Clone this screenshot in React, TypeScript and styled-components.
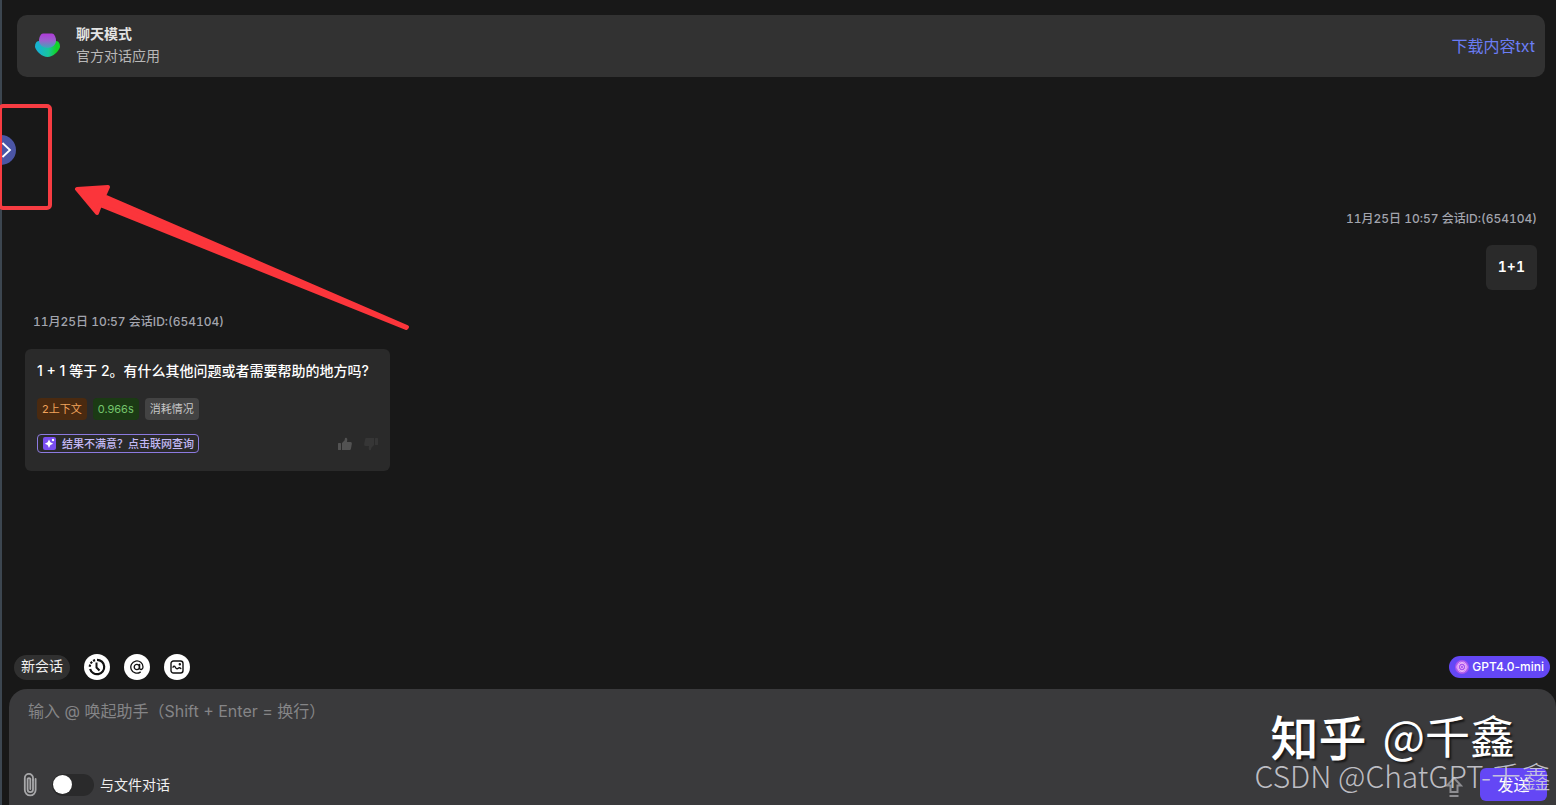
import React from "react";
import styled, { createGlobalStyle } from "styled-components";

const GlobalStyle = createGlobalStyle`
  * { box-sizing: border-box; }
  html, body { margin: 0; background: #181818; }
  body { font-family: Inter, "Noto Sans CJK SC", sans-serif; color: #fff; overflow: hidden; }
  button, input, textarea { font: inherit; color: inherit; }
  button { border: 0; cursor: pointer; }
  p, h1 { margin: 0; }
`;

const Page = styled.div`
  position: relative;
  display: flex;
  flex-direction: column;
  height: 100vh;
  overflow: hidden;
  padding-left: 2px;
  box-shadow: inset 2px 0 0 #3c4650;
  background: #181818;
`;

const Header = styled.header`
  display: flex;
  align-items: center;
  gap: 16px;
  margin: 15px 11px 0 15px;
  padding: 8px 10px 10px 18px;
  height: 62px;
  border-radius: 10px;
  background: #323232;
`;

const Titles = styled.div`
  flex: 1;
  line-height: 22px;
  font-size: 14px;
`;

const Title = styled.h1`
  font-size: 14px;
  line-height: 22px;
  font-weight: 700;
  color: #e4e4e4;
`;

const Subtitle = styled.p`
  color: #b8b8b8;
`;

const DownloadLink = styled.a`
  font-size: 16px;
  color: #6b7df5;
  text-decoration: none;
`;

const Conversation = styled.main`
  flex: 1;
  display: flex;
  flex-direction: column;
  padding: 132px 19px 0 23px;
`;

const Meta = styled.p<{ $mine?: boolean }>`
  align-self: ${(p) => (p.$mine ? "flex-end" : "flex-start")};
  padding-left: ${(p) => (p.$mine ? "0" : "8px")};
  font-size: 12px;
  line-height: 20px;
  font-weight: 500;
  font-variant-numeric: tabular-nums;
  color: #a3a5ae;
`;

const Bubble = styled.div<{ $mine?: boolean }>`
  align-self: ${(p) => (p.$mine ? "flex-end" : "flex-start")};
  width: ${(p) => (p.$mine ? "auto" : "365px")};
  margin: ${(p) => (p.$mine ? "16px 0 22px" : "17px 0 0")};
  padding: ${(p) => (p.$mine ? "11px 12px 12px" : "11px 12px 18px")};
  border-radius: 6px;
  background: #2a2a2a;
  font-size: 14px;
  line-height: 22px;
  font-weight: ${(p) => (p.$mine ? 600 : 500)};
  font-variant-numeric: ${(p) => (p.$mine ? "tabular-nums" : "normal")};
`;

const Tags = styled.div`
  display: flex;
  gap: 6px;
  margin: 16px 0 14px;
`;

const Tag = styled.span<{ $bg: string; $fg: string }>`
  padding: 0 5px;
  border-radius: 4px;
  font-size: 11px;
  line-height: 22px;
  font-weight: 400;
  background: ${(p) => p.$bg};
  color: ${(p) => p.$fg};
`;

const Actions = styled.div`
  display: flex;
  align-items: center;
  gap: 12px;
`;

const SearchButton = styled.button`
  display: flex;
  align-items: center;
  gap: 6px;
  height: 19px;
  margin-right: auto;
  padding: 0 4px 0 5px;
  border: 1px solid #8c7ae0;
  border-radius: 4px;
  background: transparent;
  color: #c3b9f5;
  font-size: 11px;
  line-height: 16px;
`;

const IconButton = styled.button<{ $color: string }>`
  display: flex;
  padding: 0;
  background: transparent;
  color: ${(p) => p.$color};
`;

const Toolbar = styled.div`
  display: flex;
  align-items: center;
  gap: 14px;
  margin: 0 6px 9px 12px;
`;

const NewChat = styled.button`
  height: 25px;
  padding: 0 7px 2px;
  border-radius: 13px;
  background: #303030;
  color: #f0f0f0;
  font-size: 14px;
  line-height: 22px;
`;

const RoundButton = styled.button`
  display: flex;
  align-items: center;
  justify-content: center;
  width: 26px;
  height: 26px;
  padding: 0;
  border-radius: 50%;
  background: #fff;
  color: #111;
`;

const ModelButton = styled.button`
  display: flex;
  align-items: center;
  gap: 3px;
  height: 22px;
  margin-left: auto;
  padding: 0 6px;
  border-radius: 11px;
  background: #6447f5;
  font-size: 12px;
  line-height: 20px;
  font-weight: 500;
`;

const Composer = styled.form`
  display: flex;
  flex-direction: column;
  height: 116px;
  margin-left: 7px;
  padding: 10px 9px 4px 13px;
  border-radius: 18px 18px 0 0;
  background: #3a3a3c;
`;

const Prompt = styled.textarea`
  flex: 1;
  padding: 0 6px;
  border: 0;
  outline: 0;
  resize: none;
  background: transparent;
  font-size: 16px;
  line-height: 24px;
  &::placeholder { color: #858587; opacity: 1; }
`;

const ComposerBar = styled.div`
  display: flex;
  align-items: center;
  height: 33px;
`;

const SwitchLabel = styled.label`
  display: flex;
  align-items: center;
  gap: 6px;
  margin: 0 auto 0 14px;
  font-size: 14px;
  line-height: 22px;
  color: #f0f0f0;
`;

const Switch = styled.input`
  appearance: none;
  display: flex;
  align-items: center;
  width: 42px;
  height: 22px;
  margin: 0;
  padding: 0 1px;
  border-radius: 11px;
  background: #2a2a2b;
  &::before {
    content: "";
    width: 19px;
    height: 19px;
    border-radius: 50%;
    background: #fff;
  }
  &:checked { justify-content: flex-end; }
`;

const ShiftHint = styled.svg`
  align-self: flex-end;
`;

const SendButton = styled.button`
  height: 33px;
  width: 67px;
  margin-left: 17px;
  padding: 0 0 2px;
  border-radius: 6px;
  background: #6447f5;
  font-size: 16px;
`;

const DrawerHandle = styled.button`
  position: absolute;
  top: 135px;
  left: -14px;
  display: flex;
  align-items: center;
  justify-content: flex-end;
  width: 30px;
  height: 30px;
  padding: 0 4px 0 0;
  border-radius: 50%;
  background: #4b55a5;
`;

const Highlight = styled.div`
  position: absolute;
  top: 104px;
  left: -2px;
  width: 54px;
  height: 106px;
  border: 4px solid #f73c42;
  border-radius: 5px;
`;

const Pointer = styled.svg`
  position: absolute;
  top: 180px;
  left: 69px;
`;

const Watermarks = styled.div`
  position: absolute;
  right: 5px;
  bottom: 15px;
  display: flex;
  flex-direction: column;
  align-items: flex-end;
  font-family: "Noto Sans CJK SC", sans-serif;
  white-space: nowrap;
  pointer-events: none;
`;

const Author = styled.p`
  display: flex;
  align-items: center;
  gap: 16px;
  padding-right: 36px;
  font-size: 45px;
  line-height: 50px;
  text-shadow: 2px 2px 2px rgba(0, 0, 0, 0.6);
`;

const Brand = styled.span`
  font-size: 48px;
  font-weight: 500;
`;

const Site = styled.p`
  font-size: 30px;
  line-height: 30px;
  font-weight: 300;
  color: rgba(214, 214, 220, 0.85);
`;

const Logo = () => (
  <svg width="25" height="25" viewBox="0 0 25 25" aria-hidden="true">
    <defs>
      <linearGradient id="base" x1="0" x2="1">
        <stop offset="0.15" stopColor="#17b3cf" />
        <stop offset="0.55" stopColor="#18c79a" />
        <stop offset="0.85" stopColor="#12d326" />
      </linearGradient>
      <linearGradient id="cap" x1="0" x2="0" y1="0" y2="1">
        <stop offset="0" stopColor="#b03ada" />
        <stop offset="0.5" stopColor="#9a62cc" />
        <stop offset="1" stopColor="#3fa5b8" />
      </linearGradient>
    </defs>
    <path d="M4 8 C1 8 0 11 0 14 C1 18 7 24 12.500 24 C18 24 24 18 25 14 C25 11 24 8 21 8Z" fill="url(#base)" />
    <path d="M8 0.500 H17 C19 0.500 21 4 21 7.500 C21 12 17 15 12.500 15 C8 15 4 12 4 7.500 C4 4 6 0.500 8 0.500Z" fill="url(#cap)" />
  </svg>
);

const Sparkle = () => (
  <svg width="13" height="13" viewBox="0 0 13 13" aria-hidden="true">
    <rect width="13" height="13" rx="2" fill="#7a4ef0" />
    <path d="M6 2.500 L7.400 5.300 L10.200 6.700 L7.400 8.100 L6 11 L4.600 8.100 L1.800 6.700 L4.600 5.300Z" fill="#fff" />
    <circle cx="10" cy="3" r="1.200" fill="#fff" />
  </svg>
);

const Thumb = ({ down = false }: { down?: boolean }) => (
  <svg width="14" height="14" viewBox="0 0 14 14" fill="currentColor" aria-hidden="true">
    <g transform={down ? "rotate(180 7 7)" : undefined}>
      <rect y="6" width="3" height="7" rx="0.500" />
      <path d="M4 6 L6.500 3.500 L7 1.200 C7.200 0.300 9.300 0.500 9.300 2.500 L9 5 H12.500 C13.800 5 14 6 13.800 7 L13 11.500 C12.800 12.600 12.200 13 11.300 13 H4Z" />
    </g>
  </svg>
);

const HistoryIcon = () => (
  <svg width="18" height="18" viewBox="0 0 18 18" fill="none" stroke="currentColor" strokeWidth="2.200" aria-hidden="true">
    <path d="M9 1.800 A7.200 7.200 0 1 1 2.100 11" />
    <path d="M1.800 8.800 A7.200 7.200 0 0 1 7.400 2" strokeDasharray="2.200 1.200" />
    <path d="M8.500 4.500 V9.500 L11.500 12.500" strokeWidth="2" />
  </svg>
);

const AtIcon = () => (
  <svg width="14" height="14" viewBox="0 0 14 14" fill="none" stroke="currentColor" strokeWidth="1.300" strokeLinecap="round" aria-hidden="true">
    <circle cx="6.800" cy="7" r="2.600" />
    <path d="M9.600 4.300 V8 C9.600 10.300 13 10 13 7 A6.100 6.100 0 1 0 10.300 12.100" />
  </svg>
);

const ImageIcon = () => (
  <svg width="14" height="14" viewBox="0 0 14 14" fill="none" stroke="currentColor" strokeWidth="1.400" strokeLinecap="round" aria-hidden="true">
    <rect x="1" y="1" width="12" height="12" rx="2.500" />
    <path d="M3 7.200 C3.600 5.800 4.600 5.800 5.300 7.200 S7.200 9.300 8.200 8.300 S10 7.600 10.800 8.400" />
    <circle cx="9.800" cy="4.300" r="0.500" fill="currentColor" />
  </svg>
);

const ModelIcon = () => (
  <svg width="14" height="14" viewBox="0 0 14 14" fill="none" aria-hidden="true">
    <circle cx="7" cy="7" r="7" fill="#a855f0" />
    <g stroke="#f0b8f8" strokeWidth="0.800">
      <circle cx="7" cy="7" r="1.600" />
      <ellipse cx="7" cy="7" rx="5.200" ry="3.600" />
      <ellipse cx="7" cy="7" rx="5.200" ry="3.600" transform="rotate(60 7 7)" />
      <ellipse cx="7" cy="7" rx="5.200" ry="3.600" transform="rotate(120 7 7)" />
    </g>
  </svg>
);

const ClipIcon = () => (
  <svg width="16" height="24" viewBox="0 0 16 24" fill="none" stroke="#a8a8aa" strokeWidth="1.800" strokeLinecap="round" aria-hidden="true">
    <path d="M11 7 V16.500 A2.700 2.700 0 0 1 5.600 16.500 V6 A1.500 1.500 0 0 1 8.300 6 V16" />
    <path d="M11 7 V5 A4 4 0 0 0 2.800 5 V17 A5.400 5.400 0 0 0 13.600 17 V6" />
  </svg>
);

const ShiftIcon = () => (
  <ShiftHint width="18" height="25" viewBox="0 0 18 25" fill="none" stroke="#8e8e92" strokeWidth="2" aria-hidden="true">
    <path d="M9 2 L16 9.500 H12.500 V16 H5.500 V9.500 H2Z" />
    <path d="M4.500 20 H13.500" />
  </ShiftHint>
);

export default function App() {
  return (
    <>
      <GlobalStyle />
      <Page>
        <Header>
          <Logo />
          <Titles>
            <Title>聊天模式</Title>
            <Subtitle>官方对话应用</Subtitle>
          </Titles>
          <DownloadLink href="#download">下载内容txt</DownloadLink>
        </Header>

        <Conversation>
          <Meta $mine>11月25日 10:57 会话ID:(654104)</Meta>
          <Bubble $mine>1+1</Bubble>
          <Meta>11月25日 10:57 会话ID:(654104)</Meta>
          <Bubble>
            <p>1 + 1 等于 2。有什么其他问题或者需要帮助的地方吗?</p>
            <Tags>
              <Tag $bg="#4a2a10" $fg="#f0a35c">2上下文</Tag>
              <Tag $bg="#1b3a14" $fg="#74c46c">0.966s</Tag>
              <Tag $bg="#434343" $fg="#c8c8c8">消耗情况</Tag>
            </Tags>
            <Actions>
              <SearchButton type="button">
                <Sparkle />
                结果不满意？点击联网查询
              </SearchButton>
              <IconButton type="button" $color="#525252" aria-label="赞">
                <Thumb />
              </IconButton>
              <IconButton type="button" $color="#363636" aria-label="踩">
                <Thumb down />
              </IconButton>
            </Actions>
          </Bubble>
        </Conversation>

        <Toolbar>
          <NewChat type="button">新会话</NewChat>
          <RoundButton type="button" aria-label="历史"><HistoryIcon /></RoundButton>
          <RoundButton type="button" aria-label="助手"><AtIcon /></RoundButton>
          <RoundButton type="button" aria-label="图片"><ImageIcon /></RoundButton>
          <ModelButton type="button">
            <ModelIcon />
            GPT4.0-mini
          </ModelButton>
        </Toolbar>

        <Composer onSubmit={(e) => e.preventDefault()}>
          <Prompt aria-label="输入" placeholder="输入 @ 唤起助手（Shift + Enter = 换行）" />
          <ComposerBar>
            <IconButton type="button" $color="#a8a8aa" aria-label="附件"><ClipIcon /></IconButton>
            <SwitchLabel>
              <Switch type="checkbox" role="switch" />
              与文件对话
            </SwitchLabel>
            <ShiftIcon />
            <SendButton type="submit">发送</SendButton>
          </ComposerBar>
        </Composer>

        <DrawerHandle type="button" aria-label="展开">
          <svg width="11" height="16" viewBox="0 0 11 16" fill="none" stroke="#fff" strokeWidth="1.800" aria-hidden="true">
            <path d="M1.500 1 L9 8 L1.500 15" />
          </svg>
        </DrawerHandle>
        <Highlight />
        <Pointer width="344" height="152" viewBox="0 0 344 152" aria-hidden="true">
          <path
            d="M8 9 L39 7 L35 16 L338 147 L337 148 L31 25 L28 33Z"
            fill="#fb353b"
            stroke="#fb353b"
            strokeWidth="4"
            strokeLinejoin="round"
          />
        </Pointer>
        <Watermarks>
          <Author>
            <Brand>知乎</Brand>
            <span>@千鑫</span>
          </Author>
          <Site>CSDN @ChatGPT-千鑫</Site>
        </Watermarks>
      </Page>
    </>
  );
}
